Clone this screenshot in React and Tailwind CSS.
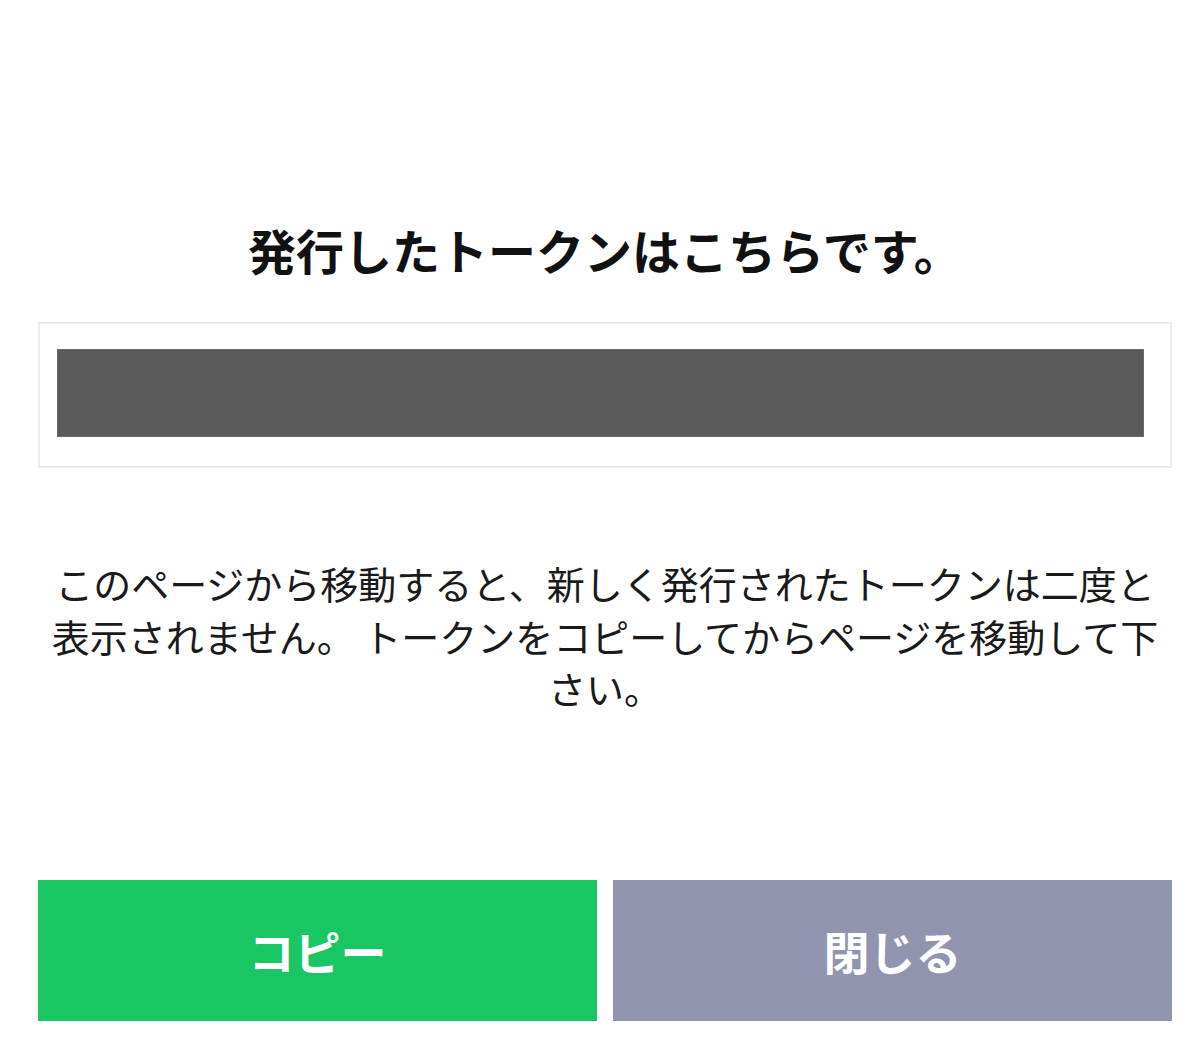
export default function App() {
  const font = { fontFamily: '"Noto Sans CJK JP", "Noto Sans", sans-serif' };
  return (
    <div className="min-h-[1044px] w-[1200px] bg-white" style={font}>
      <div className="ml-[38px] w-[1134px] pt-[214px]">
        <h1 className="text-center text-[48px] font-bold leading-[71px] text-[#111111]">
          発行したトークンはこちらです。
        </h1>
        <div className="mt-[37px] border-2 border-[#ebebeb] pl-[17px] pr-[26px] pt-[25px] pb-[29px]">
          <div className="h-[88px] bg-[#5a5a5a] border border-[#6a6a6a]" />
        </div>
        <p className="mt-[89px] text-center text-[38px] leading-[52.5px] text-[#1a1a1a]">
          このページから移動すると、新しく発行されたトークンは二度と表示されません。 トークンをコピーしてからページを移動して下さい。
        </p>
        <div className="mt-[165px] flex gap-4">
          <button className="flex h-[141px] flex-1 items-center justify-center bg-[#18c663] text-[46px] font-bold text-white">
            コピー
          </button>
          <button className="flex h-[141px] flex-1 items-center justify-center bg-[#9194ae] text-[46px] font-bold text-white">
            閉じる
          </button>
        </div>
      </div>
    </div>
  );
}
